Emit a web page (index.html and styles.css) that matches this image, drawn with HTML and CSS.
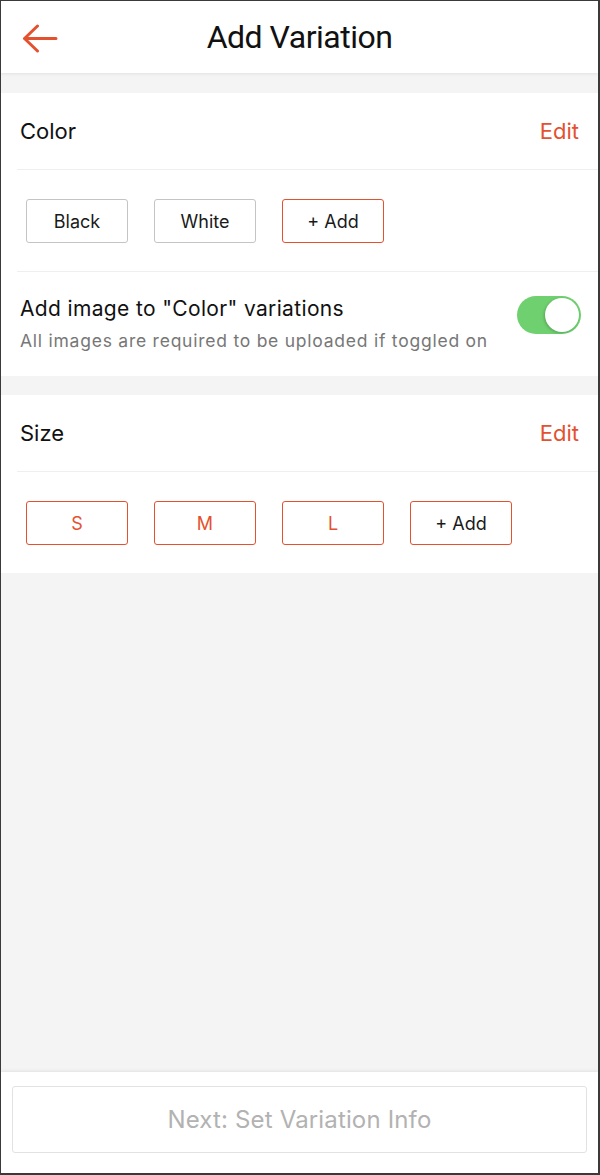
FILE: index.html
```html
<!DOCTYPE html>
<html>
<head>
<meta charset="utf-8">
<link rel="stylesheet" href="styles.css">
</head>
<body>
<div class="screen">
  <header class="topbar">
    <svg class="back" width="36" height="30" viewBox="0 0 36 30">
      <path d="M34 14.5H2.5M15.5 2L2.5 14.5L15.5 27" fill="none" stroke="#e4512f" stroke-width="3" stroke-linecap="round" stroke-linejoin="round"/>
    </svg>
    <h1 class="title">Add Variation</h1>
  </header>
  <main class="content">
    <section class="card">
      <div class="card-head">
        <span class="card-title">Color</span>
        <span class="edit">Edit</span>
      </div>
      <div class="chips">
        <span class="chip">Black</span>
        <span class="chip">White</span>
        <span class="chip chip-add">+ Add</span>
      </div>
      <div class="toggle-row">
        <div class="toggle-text">
          <div class="toggle-title">Add image to "Color" variations</div>
          <div class="toggle-sub">All images are required to be uploaded if toggled on</div>
        </div>
        <span class="switch"><span class="knob"></span></span>
      </div>
    </section>
    <section class="card">
      <div class="card-head">
        <span class="card-title">Size</span>
        <span class="edit">Edit</span>
      </div>
      <div class="chips">
        <span class="chip chip-red">S</span>
        <span class="chip chip-red">M</span>
        <span class="chip chip-red">L</span>
        <span class="chip chip-add">+ Add</span>
      </div>
    </section>
  </main>
  <footer class="bottombar">
    <div class="next">Next: Set Variation Info</div>
  </footer>
</div>
</body>
</html>
```

FILE: styles.css
```css
* { box-sizing: border-box; }
html, body { margin: 0; padding: 0; }
body {
  font-family: Inter, Roboto, "Liberation Sans", sans-serif;
  color: #1a1a1a;
}
.screen {
  width: 600px;
  height: 1175px;
  border: 1px solid #3a3a3a;
  border-right-width: 2px;
  border-bottom-width: 2px;
  background: #f4f4f4;
  display: flex;
  flex-direction: column;
  overflow: hidden;
}
.topbar {
  height: 72px;
  background: #fff;
  display: flex;
  align-items: center;
  justify-content: center;
  position: relative;
  box-shadow: 0 1px 3px rgba(0,0,0,0.08);
  z-index: 1;
  flex-shrink: 0;
}
.back {
  position: absolute;
  left: 21px;
  top: 23px;
}
.title {
  margin: 0;
  font-family: Roboto, "Liberation Sans", sans-serif;
  font-weight: 400;
  font-size: 32px;
  letter-spacing: -0.5px;
  color: #111;
}
.content {
  flex: 1;
  padding-top: 20px;
  display: flex;
  flex-direction: column;
  gap: 19px;
}
.card {
  background: #fff;
}
.card-head {
  height: 77px;
  display: flex;
  align-items: center;
  justify-content: space-between;
  margin-left: 16px;
  padding: 0 19px 0 3px;
  border-bottom: 1px solid #efefef;
}
.card-title {
  font-size: 22px;
  color: #111;
}
.edit {
  font-size: 22px;
  color: #e4512f;
}
.chips {
  display: flex;
  gap: 26px;
  padding: 29px 0 28px 25px;
}
.chip {
  width: 102px;
  height: 44px;
  border: 1px solid #c4c4c4;
  border-radius: 3px;
  display: flex;
  align-items: center;
  justify-content: center;
  font-size: 18px;
  color: #1a1a1a;
}
.chip-add { border-color: #e4512f; }
.chip-red { border-color: #e4512f; color: #e4512f; }
.toggle-row {
  margin-left: 16px;
  border-top: 1px solid #efefef;
  height: 105px;
  display: flex;
  align-items: center;
  justify-content: space-between;
  padding: 0 17px 0 3px;
}
.toggle-text {
  display: flex;
  flex-direction: column;
  gap: 9px;
  margin-top: -2px;
}
.toggle-title {
  font-size: 21px;
  letter-spacing: 0.35px;
  color: #111;
}
.toggle-sub {
  font-size: 17.5px;
  letter-spacing: 0.76px;
  color: #777;
}
.switch {
  width: 64px;
  height: 38px;
  border-radius: 19px;
  background: #6fd06f;
  position: relative;
  margin-top: -18px;
}
.knob {
  position: absolute;
  right: 2px;
  top: 2px;
  width: 34px;
  height: 34px;
  border-radius: 50%;
  background: #fff;
  box-shadow: -1px 1px 3px rgba(0,0,0,0.2);
}
.bottombar {
  height: 101px;
  background: #fff;
  box-shadow: 0 -1px 3px rgba(0,0,0,0.08);
  padding: 14px 11px 18px 11px;
  flex-shrink: 0;
}
.next {
  height: 67px;
  border: 1px solid #e2e2e2;
  border-radius: 3px;
  display: flex;
  align-items: center;
  justify-content: center;
  font-size: 24px;
  letter-spacing: 0.15px;
  color: #b2b2b2;
}
```
